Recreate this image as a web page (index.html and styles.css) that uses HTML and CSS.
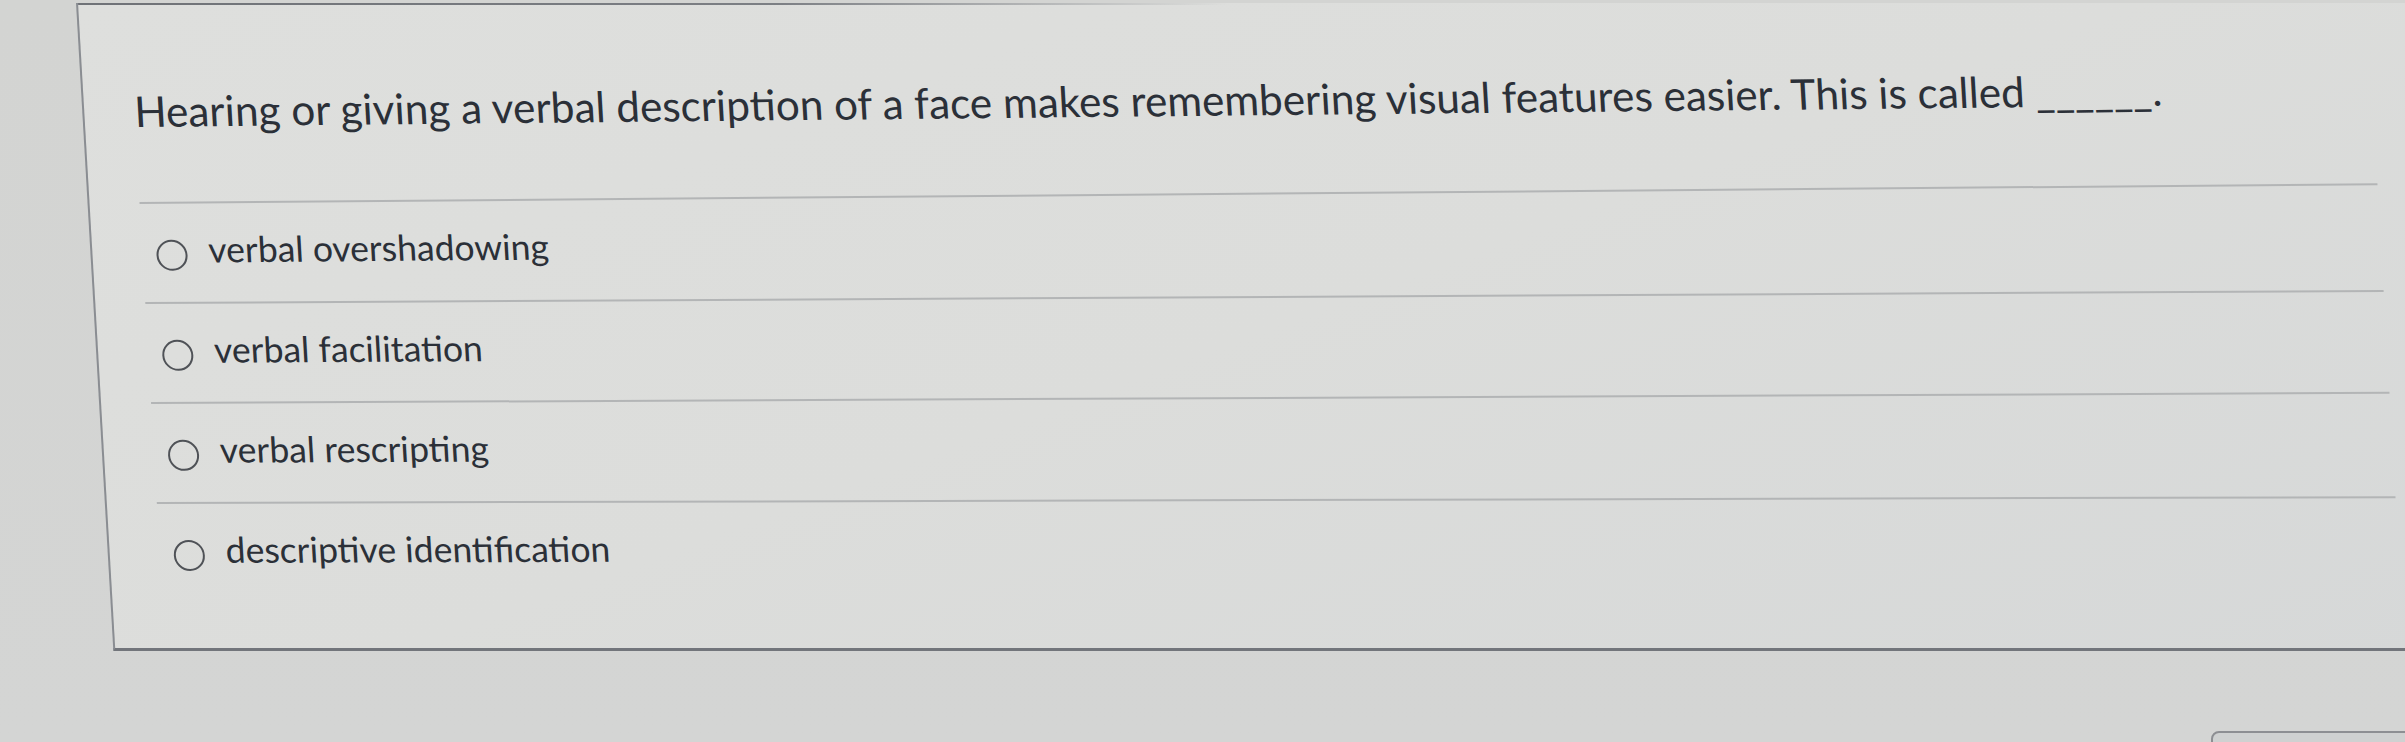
FILE: index.html
```html
<!DOCTYPE html>
<html lang="en">
<head>
<meta charset="utf-8">
<title>Quiz question</title>
<link rel="stylesheet" href="styles.css">
</head>
<body>
<div class="page">
  <div class="card">
    <div class="content">
      <div class="question">Hearing or giving a verbal description of a face makes remembering visual features easier. This is called <span class="blank">______</span>.</div>
      <div class="answers">
        <label class="answer a1"><span class="radio"></span><span class="answer-text">verbal overshadowing</span></label>
        <label class="answer a2"><span class="radio"></span><span class="answer-text">verbal facilitation</span></label>
        <label class="answer a3"><span class="radio"></span><span class="answer-text">verbal rescripting</span></label>
        <label class="answer a4"><span class="radio"></span><span class="answer-text">descriptive identification</span></label>
      </div>
    </div>
  </div>
  <div class="footer"><div class="btn"></div></div>
</div>
</body>
</html>
```

FILE: styles.css
```css
html, body {
  margin: 0;
  padding: 0;
}
body {
  width: 2405px;
  height: 742px;
  overflow: hidden;
  background: linear-gradient(180deg, #d3d4d2 0%, #d4d5d4 100%);
  font-family: "Lato", "Liberation Sans", sans-serif;
  color: #2b3038;
}
.page {
  width: 2405px;
  height: 742px;
  overflow: hidden;
}
.card {
  margin-left: 76px;
  margin-top: 3px;
  width: 2360px;
  box-sizing: border-box;
  padding-top: 2px;
  background:
    linear-gradient(90deg, #6f7277 0, #7c7f84 700px, rgba(124,127,132,0) 1150px) top left / 100% 2px no-repeat,
    linear-gradient(160deg, #dedfdd 0%, #dcdddb 50%, #d6d8d8 100%);
  border-left: 2px solid #8a8d92;
  border-bottom: 3px solid #72757b;
  transform: skewX(3.3deg);
  transform-origin: 0 0;
}
.content {
  padding: 81px 69px 46px 50px;
}
.question {
  font-size: 42.3px;
  line-height: 50px;
  margin-bottom: 66px;
  white-space: nowrap;
  transform: skewY(-0.6deg);
  transform-origin: 0 0;
}
.answers {
  display: flex;
  flex-direction: column;
}
.answer {
  display: flex;
  align-items: center;
  height: 98px;
  box-sizing: content-box;
  border-top: 2px solid #b3b5b6;
  padding-left: 14px;
  transform-origin: 0 0;
}
.answer .radio {
  width: 31px;
  height: 31px;
  box-sizing: border-box;
  border: 2px solid #4f5257;
  border-radius: 50%;
  margin-top: 4px;
  flex: none;
}
.answer-text {
  font-size: 35.5px;
  line-height: 43px;
  margin-left: 21px;
  margin-bottom: 7px;
}
.a1 { transform: skewY(-0.48deg); }
.a2 { transform: skewY(-0.31deg); }
.a3 { transform: skewY(-0.26deg); }
.a4 { transform: skewY(-0.15deg); }
.footer {
  display: flex;
  justify-content: flex-end;
  margin-top: 80px;
}
.btn {
  width: 240px;
  height: 40px;
  margin-right: -50px;
  border: 2px solid #8d8f93;
  border-radius: 8px;
  background: #cfd1d1;
}
```
